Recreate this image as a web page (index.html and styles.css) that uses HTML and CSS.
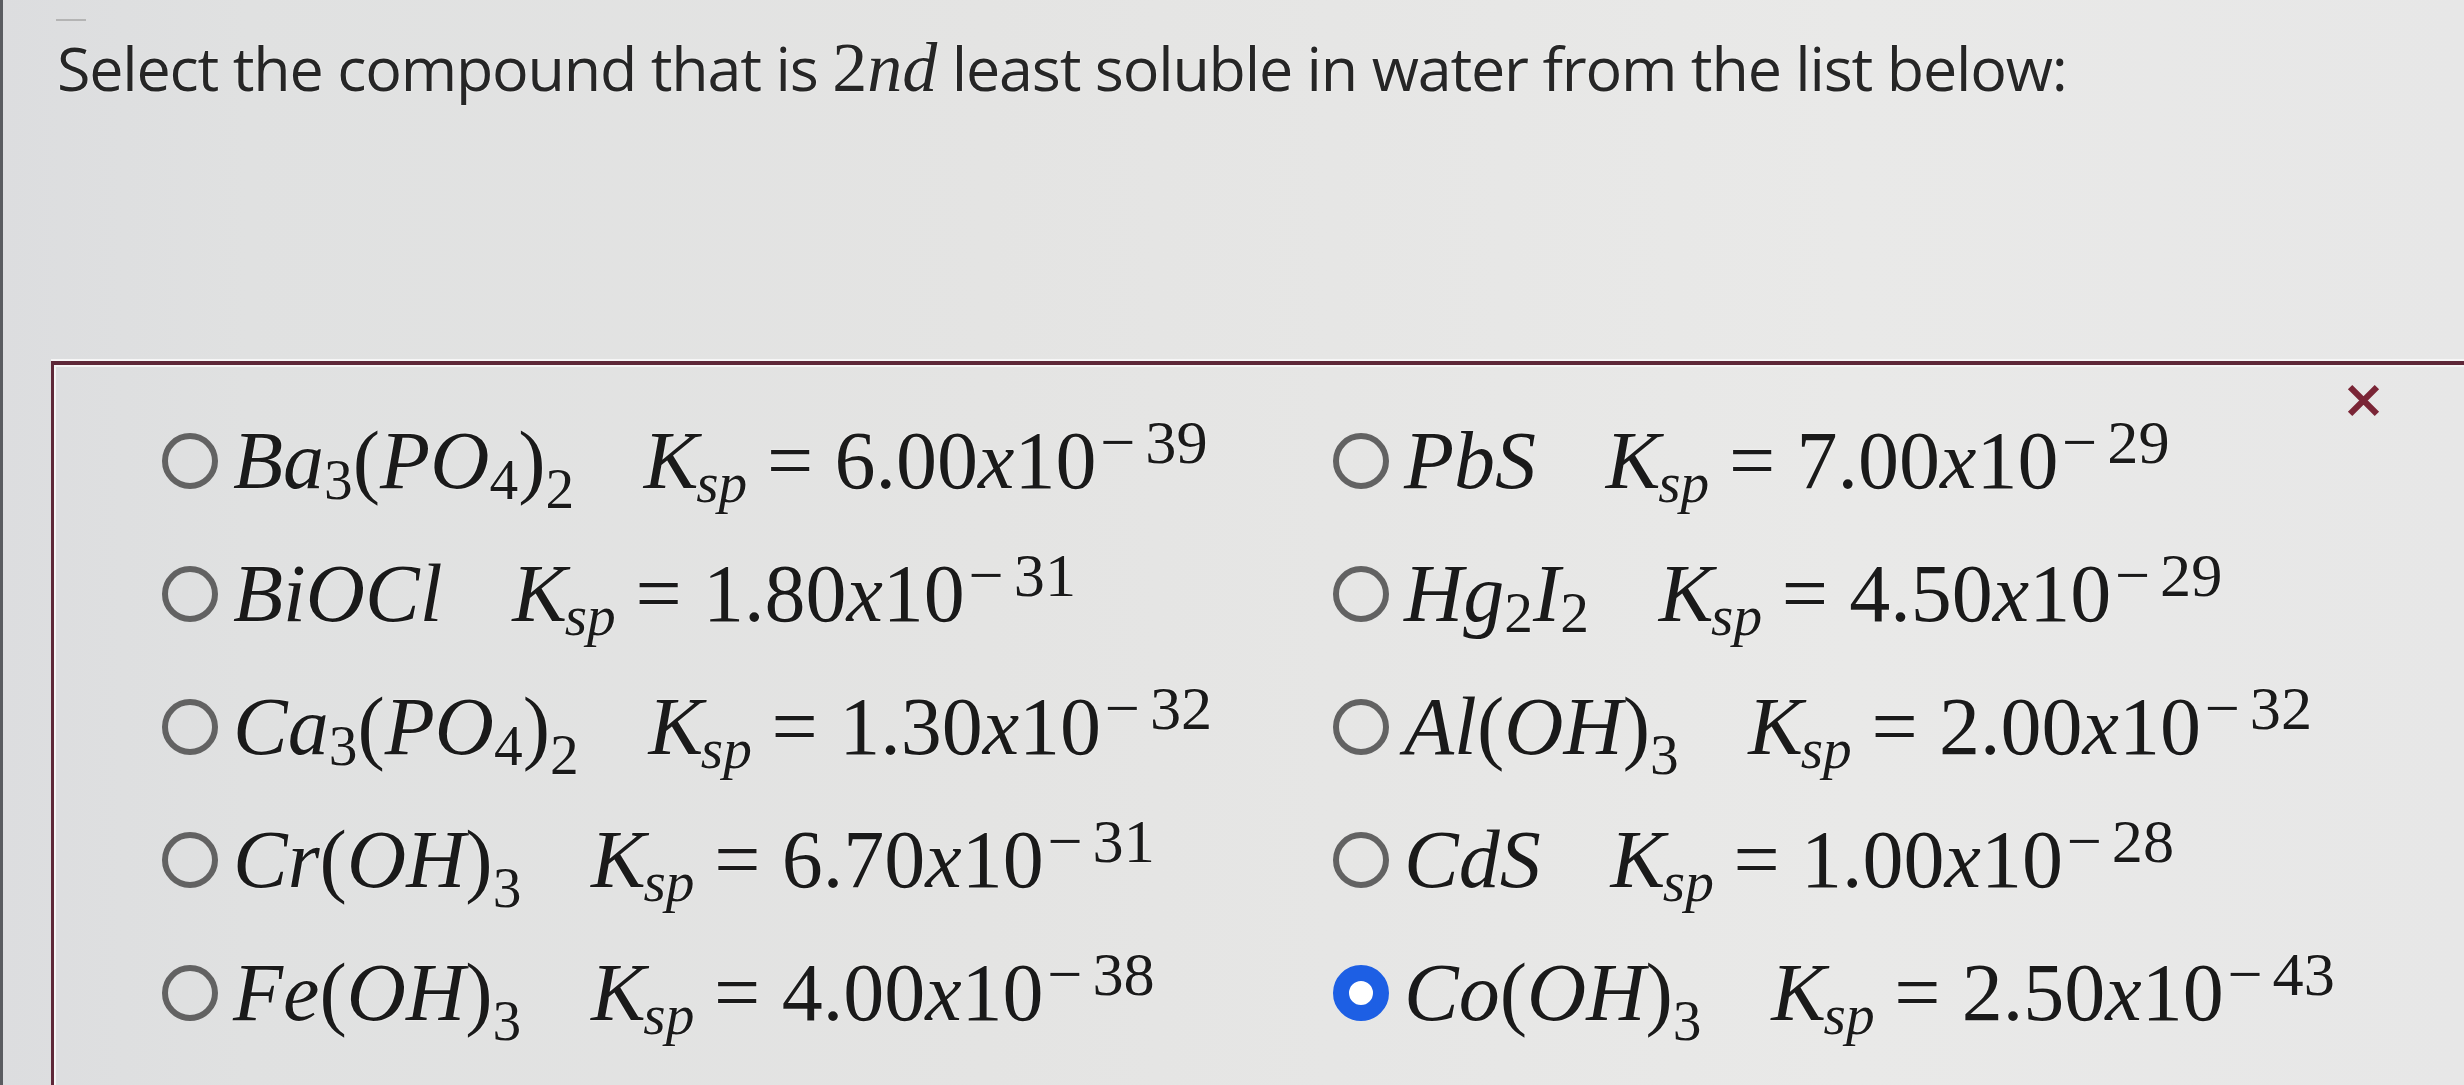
FILE: index.html
```html
<!DOCTYPE html>
<html lang="en">
<head>
<meta charset="utf-8">
<title>Ksp question</title>
<link rel="stylesheet" href="styles.css">
</head>
<body>
<div class="page">
  <span class="tick"></span>
  <h1 class="question">Select the compound that is <span class="qm">2<i>nd</i></span> least soluble in water from the list below:</h1>

  <div class="answer-box">
    <svg class="wrong" viewBox="0 0 32 32" aria-hidden="true"><path d="M3 3 L29 29 M29 3 L3 29"/></svg>
    <div class="options">
      <div class="opt"><span class="radio"></span><span class="math"><i>Ba</i><span class="sub">3</span>(<i>PO</i><span class="sub">4</span>)<span class="sub low">2</span><span class="ksp"><i>K</i><span class="sub sp"><i>sp</i></span></span><span class="eq">=</span>6.00<i>x</i>10<span class="sup">−<span class="exp">39</span></span></span></div>
      <div class="opt"><span class="radio"></span><span class="math"><i>PbS</i><span class="ksp"><i>K</i><span class="sub sp"><i>sp</i></span></span><span class="eq">=</span>7.00<i>x</i>10<span class="sup">−<span class="exp">29</span></span></span></div>

      <div class="opt"><span class="radio"></span><span class="math"><i>BiOCl</i><span class="ksp"><i>K</i><span class="sub sp"><i>sp</i></span></span><span class="eq">=</span>1.80<i>x</i>10<span class="sup">−<span class="exp">31</span></span></span></div>
      <div class="opt"><span class="radio"></span><span class="math"><i>Hg</i><span class="sub">2</span><i>I</i><span class="sub">2</span><span class="ksp"><i>K</i><span class="sub sp"><i>sp</i></span></span><span class="eq">=</span>4.50<i>x</i>10<span class="sup">−<span class="exp">29</span></span></span></div>

      <div class="opt"><span class="radio"></span><span class="math"><i>Ca</i><span class="sub">3</span>(<i>PO</i><span class="sub">4</span>)<span class="sub low">2</span><span class="ksp"><i>K</i><span class="sub sp"><i>sp</i></span></span><span class="eq">=</span>1.30<i>x</i>10<span class="sup">−<span class="exp">32</span></span></span></div>
      <div class="opt"><span class="radio"></span><span class="math"><i>Al</i>(<i>OH</i>)<span class="sub low">3</span><span class="ksp"><i>K</i><span class="sub sp"><i>sp</i></span></span><span class="eq">=</span>2.00<i>x</i>10<span class="sup">−<span class="exp">32</span></span></span></div>

      <div class="opt"><span class="radio"></span><span class="math"><i>Cr</i>(<i>OH</i>)<span class="sub low">3</span><span class="ksp"><i>K</i><span class="sub sp"><i>sp</i></span></span><span class="eq">=</span>6.70<i>x</i>10<span class="sup">−<span class="exp">31</span></span></span></div>
      <div class="opt"><span class="radio"></span><span class="math"><i>CdS</i><span class="ksp"><i>K</i><span class="sub sp"><i>sp</i></span></span><span class="eq">=</span>1.00<i>x</i>10<span class="sup">−<span class="exp">28</span></span></span></div>

      <div class="opt"><span class="radio"></span><span class="math"><i>Fe</i>(<i>OH</i>)<span class="sub low">3</span><span class="ksp"><i>K</i><span class="sub sp"><i>sp</i></span></span><span class="eq">=</span>4.00<i>x</i>10<span class="sup">−<span class="exp">38</span></span></span></div>
      <div class="opt"><span class="radio checked"></span><span class="math"><i>Co</i>(<i>OH</i>)<span class="sub low">3</span><span class="ksp"><i>K</i><span class="sub sp"><i>sp</i></span></span><span class="eq">=</span>2.50<i>x</i>10<span class="sup">−<span class="exp">43</span></span></span></div>
    </div>
  </div>
</div>
</body>
</html>
```

FILE: styles.css
```css
html, body {
  margin: 0;
  padding: 0;
  height: 100%;
  overflow: hidden;
}

body {
  background: linear-gradient(90deg, #dcdddf 0%, #e0e1e1 10%, #e4e4e3 40%, #e9e9e8 75%, #e7e7e7 100%);
  font-family: "Open Sans", "Noto Sans", sans-serif;
  color: #262626;
}

.page {
  position: relative;
  min-height: 100%;
  border-left: 3px solid #5a5c60;
  box-sizing: border-box;
  padding-top: 33px;
}

.tick {
  position: absolute;
  left: 53px;
  top: 19px;
  width: 30px;
  height: 2px;
  background: #b4b4b4;
}

.question {
  margin: 0 0 0 54px;
  font-size: 61px;
  font-weight: 400;
  letter-spacing: -1.2px;
  line-height: 1;
  color: #262626;
  text-shadow: 0 0 2px #ffffff;
  white-space: nowrap;
}

.qm {
  font-family: "Liberation Serif", "Times New Roman", serif;
  font-size: 70px;
  letter-spacing: 0;
}

.qm i {
  font-style: italic;
}

.answer-box {
  position: relative;
  margin: 258px 0 0 48px;
  border: 3px solid #5e2838;
  border-top-width: 4px;
  border-right: none;
  border-bottom: none;
  box-shadow: 0 -2px 0 #f6f6f6, inset 2px 2px 0 #f4f4f4;
  padding: 29px 0 0 108px;
  height: 900px;
}

.wrong {
  position: absolute;
  left: 2293px;
  top: 19px;
  width: 33px;
  height: 33px;
  fill: none;
  stroke: #7a2536;
  stroke-width: 6;
}

.options {
  display: grid;
  grid-template-columns: 1171px 1fr;
  grid-auto-rows: 133px;
}

.opt {
  display: flex;
  align-items: center;
  gap: 15px;
}

.radio {
  flex: none;
  width: 56px;
  height: 56px;
  box-sizing: border-box;
  border: 6px solid #626262;
  border-radius: 50%;
  background: transparent;
}

.radio.checked {
  border: 16px solid #1d5fe4;
  background: #ffffff;
}

.math {
  font-family: "Liberation Serif", "Times New Roman", serif;
  font-size: 82px;
  line-height: 1;
  white-space: nowrap;
  color: #1a1a1a;
  text-shadow: 0 0 2px #ffffff;
}

.math i {
  font-style: italic;
}

.sub {
  font-size: 0.7em;
  line-height: 0;
  vertical-align: -0.2em;
}

.sub.low {
  vertical-align: -0.34em;
}

.sub.sp {
  vertical-align: -0.26em;
  margin-left: -0.04em;
}

.ksp {
  margin-left: 0.85em;
}

.eq {
  margin: 0 0.26em 0 0.24em;
}

.sup {
  font-size: 0.76em;
  line-height: 0;
  vertical-align: 0.4em;
  margin-left: 0.06em;
}

.exp {
  margin-left: 0.16em;
}
```
